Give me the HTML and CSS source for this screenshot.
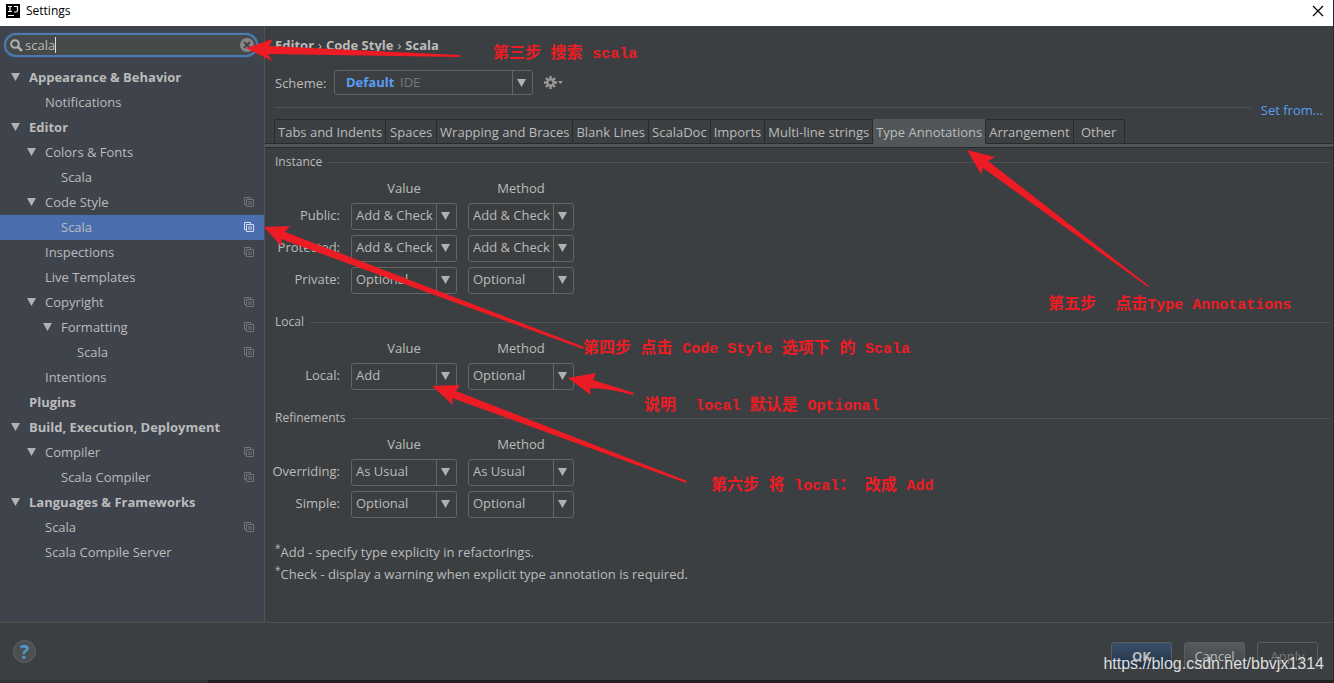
FILE: index.html
```html
<!DOCTYPE html>
<html lang="en">
<head>
<meta charset="utf-8">
<title>Settings</title>
<link rel="stylesheet" href="styles.css">
</head>
<body>
<svg class="defs" aria-hidden="true">
  <symbol id="down" viewBox="0 0 9 8"><path d="M0 0h9L4.500 8z" fill="currentColor"/></symbol>
  <symbol id="copy" viewBox="0 0 10 10"><path d="M2 7.500H.5V.5h6V2M2.500 2.500h7v7h-7zM4 5h4M4 7h4" fill="none" stroke="currentColor"/></symbol>
</svg>
<div class="window">
  <header class="titlebar">
    <svg class="logo" viewBox="0 0 14 14"><path d="M0 0h14v14H0z" fill="#000"/><path d="M2 2.500h4M4 2.500v5M2 7.500h4M8 2.500h3.500v4q0 1.500-1.500 1.500H8M2 11.500h6" fill="none" stroke="#fff" stroke-width="1.200"/></svg>
    <h1 class="title">Settings</h1>
    <button class="close" aria-label="Close"><svg viewBox="0 0 10 10"><path d="M0 0l10 10M10 0L0 10" stroke="#000" stroke-width="1.200"/></svg></button>
  </header>
  <div class="main">
    <aside class="sidebar">
      <div class="search">
        <svg class="lens" viewBox="0 0 13 13"><circle cx="5" cy="5" r="3.800" fill="none" stroke="currentColor" stroke-width="2"/><path d="M8 8l4 4" stroke="currentColor" stroke-width="2.500"/></svg>
        <input class="query" type="text" aria-label="Search settings" value="scala"><span class="caret"></span>
        <button class="clear" aria-label="Clear"><svg viewBox="0 0 14 14"><circle cx="7" cy="7" r="7" fill="#868686"/><path d="M4 4l6 6M10 4l-6 6" stroke="#3f4449" stroke-width="2"/></svg></button>
      </div>
      <nav class="tree">
        <a class="row bold" href="#"><svg class="arrow"><use href="#down"/></svg><span class="name">Appearance &amp; Behavior</span></a>
        <a class="row leaf l1" href="#"><span class="name">Notifications</span></a>
        <a class="row bold" href="#"><svg class="arrow"><use href="#down"/></svg><span class="name">Editor</span></a>
        <a class="row l1" href="#"><svg class="arrow"><use href="#down"/></svg><span class="name">Colors &amp; Fonts</span></a>
        <a class="row leaf l2" href="#"><span class="name">Scala</span></a>
        <a class="row l1" href="#"><svg class="arrow"><use href="#down"/></svg><span class="name">Code Style</span><svg class="copy"><use href="#copy"/></svg></a>
        <a class="row leaf l2 selected" href="#"><span class="name">Scala</span><svg class="copy"><use href="#copy"/></svg></a>
        <a class="row leaf l1" href="#"><span class="name">Inspections</span><svg class="copy"><use href="#copy"/></svg></a>
        <a class="row leaf l1" href="#"><span class="name">Live Templates</span></a>
        <a class="row l1" href="#"><svg class="arrow"><use href="#down"/></svg><span class="name">Copyright</span><svg class="copy"><use href="#copy"/></svg></a>
        <a class="row l2" href="#"><svg class="arrow"><use href="#down"/></svg><span class="name">Formatting</span><svg class="copy"><use href="#copy"/></svg></a>
        <a class="row leaf l3" href="#"><span class="name">Scala</span><svg class="copy"><use href="#copy"/></svg></a>
        <a class="row leaf l1" href="#"><span class="name">Intentions</span></a>
        <a class="row leaf bold" href="#"><span class="name">Plugins</span></a>
        <a class="row bold" href="#"><svg class="arrow"><use href="#down"/></svg><span class="name">Build, Execution, Deployment</span></a>
        <a class="row l1" href="#"><svg class="arrow"><use href="#down"/></svg><span class="name">Compiler</span><svg class="copy"><use href="#copy"/></svg></a>
        <a class="row leaf l2" href="#"><span class="name">Scala Compiler</span><svg class="copy"><use href="#copy"/></svg></a>
        <a class="row bold" href="#"><svg class="arrow"><use href="#down"/></svg><span class="name">Languages &amp; Frameworks</span></a>
        <a class="row leaf l1" href="#"><span class="name">Scala</span><svg class="copy"><use href="#copy"/></svg></a>
        <a class="row leaf l1" href="#"><span class="name">Scala Compile Server</span></a>
      </nav>
    </aside>
    <main class="content">
      <div class="crumbs"><b>Editor</b><span>›</span><b>Code Style</b><span>›</span><b>Scala</b></div>
      <div class="scheme">
        <label for="scheme">Scheme:</label>
        <div class="combo wide">
          <select id="scheme"><option>Default</option></select>
          <span class="hint">IDE</span>
          <svg class="arrow"><use href="#down"/></svg>
        </div>
        <button class="gear" aria-label="Scheme actions"><svg viewBox="0 0 20 13"><g stroke="currentColor" stroke-width="2.400"><path d="M6.500 0v13M0 6.500h13M2 2l9 9M11 2l-9 9"/></g><circle cx="6.500" cy="6.500" r="4.200" fill="currentColor"/><circle cx="6.500" cy="6.500" r="2" fill="#3c3f41"/><path d="M14 5h5l-2.500 3z" fill="currentColor"/></svg></button>
      </div>
      <div class="from"><hr><a href="#">Set from...</a></div>
      <div class="tabs" role="tablist">
        <button class="tab" role="tab">Tabs and Indents</button><button class="tab" role="tab">Spaces</button><button class="tab" role="tab">Wrapping and Braces</button><button class="tab" role="tab">Blank Lines</button><button class="tab" role="tab">ScalaDoc</button><button class="tab" role="tab">Imports</button><button class="tab" role="tab">Multi-line strings</button><button class="tab active" role="tab" aria-selected="true">Type Annotations</button><button class="tab" role="tab">Arrangement</button><button class="tab" role="tab">Other</button>
      </div>
      <section class="panel">
        <h2 class="group">Instance</h2>
        <div class="grid">
          <span class="head first">Value</span><span class="head">Method</span>
          <label for="pub">Public:</label>
          <div class="combo"><select id="pub"><option>Add &amp; Check</option></select><svg class="arrow"><use href="#down"/></svg></div>
          <div class="combo"><select aria-label="Public method"><option>Add &amp; Check</option></select><svg class="arrow"><use href="#down"/></svg></div>
          <label for="pro">Protected:</label>
          <div class="combo"><select id="pro"><option>Add &amp; Check</option></select><svg class="arrow"><use href="#down"/></svg></div>
          <div class="combo"><select aria-label="Protected method"><option>Add &amp; Check</option></select><svg class="arrow"><use href="#down"/></svg></div>
          <label for="pri">Private:</label>
          <div class="combo"><select id="pri"><option>Optional</option></select><svg class="arrow"><use href="#down"/></svg></div>
          <div class="combo"><select aria-label="Private method"><option>Optional</option></select><svg class="arrow"><use href="#down"/></svg></div>
        </div>
        <h2 class="group">Local</h2>
        <div class="grid">
          <span class="head first">Value</span><span class="head">Method</span>
          <label for="loc">Local:</label>
          <div class="combo"><select id="loc"><option>Add</option></select><svg class="arrow"><use href="#down"/></svg></div>
          <div class="combo"><select aria-label="Local method"><option>Optional</option></select><svg class="arrow"><use href="#down"/></svg></div>
        </div>
        <h2 class="group">Refinements</h2>
        <div class="grid">
          <span class="head first">Value</span><span class="head">Method</span>
          <label for="ovr">Overriding:</label>
          <div class="combo"><select id="ovr"><option>As Usual</option></select><svg class="arrow"><use href="#down"/></svg></div>
          <div class="combo"><select aria-label="Overriding method"><option>As Usual</option></select><svg class="arrow"><use href="#down"/></svg></div>
          <label for="sim">Simple:</label>
          <div class="combo"><select id="sim"><option>Optional</option></select><svg class="arrow"><use href="#down"/></svg></div>
          <div class="combo"><select aria-label="Simple method"><option>Optional</option></select><svg class="arrow"><use href="#down"/></svg></div>
        </div>
        <div class="notes">
          <p class="note"><sup>*</sup>Add - specify type explicity in refactorings.</p>
          <p class="note"><sup>*</sup>Check - display a warning when explicit type annotation is required.</p>
        </div>
      </section>
    </main>
  </div>
  <footer class="footer">
    <button class="help" aria-label="Help">?</button>
    <div class="actions"><button class="btn ok">OK</button><button class="btn cancel">Cancel</button><button class="btn apply" disabled>Apply</button></div>
  </footer>
  <div class="strip"><span></span></div>
  <svg class="marks" viewBox="0 0 1334 683" aria-hidden="true">
    <path d="M246 48l27-9-4 7 191 9v2l-192-3 4 7z"/>
    <path d="M264 227l26-1-5 6 299 115-1 2-302-110 1 8z"/>
    <path d="M568 378l28-5-3 7 41 13-1 2q-20-6-43-7l1 7z"/>
    <path d="M432 386l28-1-4 6 231 90-1 2-234-85 1 7z"/>
    <path d="M967 150l28 7-7 4 161 125-1 1-165-119-2 6z"/>
  </svg>
  <p class="mark m3">第三步 搜索 <span>scala</span></p>
  <p class="mark m4">第四步 点击 <span>Code Style</span> 选项下 的 <span>Scala</span></p>
  <p class="mark m5">第五步&nbsp; 点击<span>Type Annotations</span></p>
  <p class="mark mi">说明&nbsp; <span>local</span> 默认是 <span>Optional</span></p>
  <p class="mark m6">第六步 将 <span>local</span>： 改成 <span>Add</span></p>
  <p class="watermark">https://blog.csdn.net/bbvjx1314</p>
</div>
</body>
</html>
```
FILE: styles.css
```css
* { box-sizing: border-box; }
body { margin: 0; background: #3c3f41; color: #bbb; font: 13px/20px "Open Sans", "Noto Sans CJK SC", sans-serif; }
button, input, select { font: inherit; color: inherit; padding: 0; margin: 0; border: 0; background: none; outline: 0; }
svg { display: block; }
h1, h2, p { margin: 0; font: inherit; }
a { color: inherit; text-decoration: none; }
.defs { position: absolute; width: 0; height: 0; }
.window { position: relative; display: flex; flex-direction: column; min-height: 100vh; border-right: 1px solid #27292b; }
.titlebar { display: flex; align-items: center; gap: 6px; height: 26px; padding: 0 10px 5px 6px; background: #fff; color: #000; }
.logo { width: 14px; height: 14px; }
.title { flex: 1; font-size: 12px; }
.close svg { width: 10px; height: 10px; overflow: visible; }
.main { flex: 1; display: flex; }

.sidebar { width: 265px; background: #3f434c; border-right: 1px solid #515355; padding-top: 7px; }
.search { display: flex; align-items: center; height: 24px; margin: 0 6px 8px 4px; padding: 0 2px 0 6px; border: 2px solid #4a7cb0; border-radius: 13px; background: #45494a; box-shadow: 0 0 2px #466d94; }
.lens { width: 13px; height: 13px; margin: 0 2px 0 -2px; color: #afb1b3; }
.query { field-sizing: content; }
.caret { width: 1px; height: 16px; background: #ddd; }
.clear { margin-left: auto; }
.clear svg { width: 14px; height: 14px; }
.row { display: flex; align-items: center; height: 25px; padding: 0 10px 2px 11px; }
.row.leaf { padding-left: 29px; }
.row.l1 { padding-left: 27px; }
.row.l2 { padding-left: 43px; }
.row.leaf.l1 { padding-left: 45px; }
.row.leaf.l2 { padding-left: 61px; }
.row.leaf.l3 { padding-left: 77px; }
.row .arrow { margin-right: 9px; }
.arrow { width: 9px; height: 8px; color: #b2b2b2; }
.bold { font-weight: bold; }
.name { flex: 1; }
.copy { width: 10px; height: 10px; color: #71757b; }
.selected { background: #4b6eaf; }
.selected .copy { color: #d5dced; }

.content { flex: 1; min-width: 0; padding-top: 9px; }
.crumbs { display: flex; gap: 4px; padding-left: 10px; }
.scheme { display: flex; align-items: center; height: 25px; margin: 15px 0 0 10px; }
.scheme label { width: 59px; }
.combo { position: relative; height: 27px; border: 1px solid #646464; border-radius: 3px; }
.combo select { display: block; appearance: none; width: 100%; height: 100%; padding: 0 0 3px 4px; }
.combo::after { content: ""; position: absolute; top: 0; bottom: 0; right: 19px; border-left: 1px solid #646464; }
.combo .arrow { position: absolute; right: 6px; top: 8px; pointer-events: none; }
.combo.wide { width: 199px; height: 25px; }
.wide select { padding: 0 0 2px 11px; color: #589df6; font-weight: bold; }
.hint { position: absolute; left: 65px; top: 1px; color: #777; }
.gear { margin-left: 11px; color: #999; }
.gear svg { width: 20px; height: 13px; }
.from { display: flex; gap: 10px; height: 24px; padding: 5px 10px 0 10px; }
.from hr { flex: 1; height: 1px; margin: 7px 0; border: 0; background: #515556; }
.from a { color: #589df6; }
.tabs { display: flex; height: 29px; padding-left: 9px; border-bottom: 1px solid #282a2b; background: linear-gradient(#282a2b, #282a2b) 0 24px / 100% 1px no-repeat, linear-gradient(#515658, #515658) 0 25px / 100% 3px no-repeat; }
.tab { height: 25px; min-width: 51px; padding: 0 3px; border: solid #282a2b; border-width: 1px 1px 1px 0; white-space: nowrap; }
.tab:first-child { border-left-width: 1px; }
.active { background: #515658; border-bottom-color: #515658; border-top-color: #515658; }
.panel { padding: 4px 3px 0 10px; }
.group { display: flex; align-items: center; gap: 6px; font-size: 12px; }
.group::after { content: ""; flex: 1; height: 1px; background: #515151; }
.grid { display: grid; grid-template-columns: 65px 106px 106px; gap: 5px 11px; align-items: center; margin: 6px 0 18px; }
.grid label { text-align: right; white-space: nowrap; justify-self: end; padding-bottom: 3px; }
.head { text-align: center; }
.head.first { grid-column: 2; }
.notes { padding-top: 5px; }
.note { line-height: 22px; }
.note sup { font-size: 10px; line-height: 10px; }

.footer { display: flex; justify-content: space-between; align-items: center; height: 58px; padding: 0 15px 0 13px; border-top: 1px solid #515151; }
.help { width: 23px; height: 23px; border: 1px solid #616568; border-radius: 50%; background: #4c5052; color: #4a9cc9; font: bold 19px/20px "Noto Sans", sans-serif; }
.actions { display: flex; gap: 12px; padding-top: 8px; }
.btn { width: 61px; height: 27px; border: 1px solid #5b5e60; border-radius: 3px; }
.ok { background: linear-gradient(#384f6b, #233143); font-weight: bold; }
.cancel { background: linear-gradient(#555a5c, #414547); }
.apply { color: #777; }
.strip { display: flex; height: 3px; background: #333135; }
.strip span { flex: 1; margin-left: 208px; background: #231f20; }

.marks { position: absolute; left: 0; top: 0; width: 1334px; height: 683px; fill: #ed1c24; pointer-events: none; }
.mark { position: absolute; color: #ed1c24; font: bold 16px/20px "Liberation Mono", "Noto Sans CJK SC", monospace; white-space: nowrap; }
.mark span { font-size: 15px; }
.m3 { left: 493px; top: 44px; }
.m4 { left: 583px; top: 339px; }
.m5 { left: 1048px; top: 295px; }
.mi { left: 644px; top: 396px; }
.m6 { left: 711px; top: 476px; }
.watermark { position: absolute; right: 9px; bottom: 9px; color: #ddd; font: 16px/20px "Liberation Sans", Arial, sans-serif; }
```
